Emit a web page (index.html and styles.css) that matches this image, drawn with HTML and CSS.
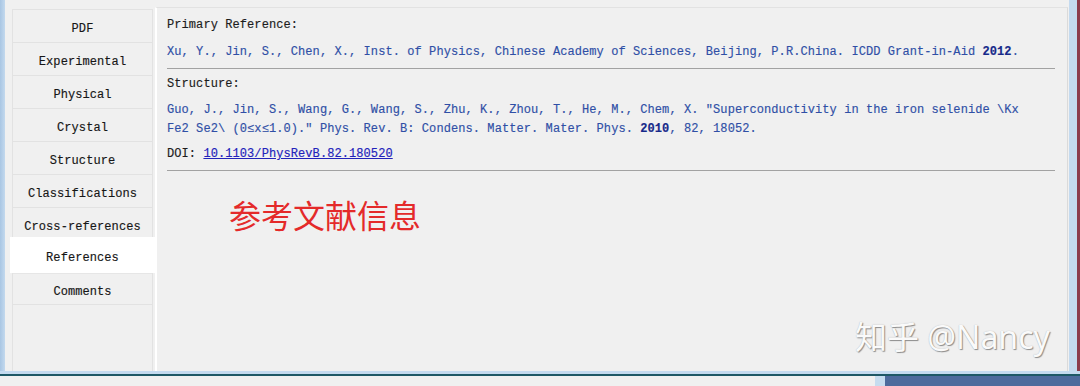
FILE: index.html
```html
<!DOCTYPE html>
<html>
<head>
  <meta charset="utf-8">
  <title>References</title>
  <link rel="stylesheet" href="styles.css">
</head>
<body>
  <div class="screen">
    <div class="frame">
      <div class="edge-left"></div>
      <div class="dialog">
        <nav class="tabs">
          <div class="tab">PDF</div>
          <div class="tab">Experimental</div>
          <div class="tab">Physical</div>
          <div class="tab">Crystal</div>
          <div class="tab">Structure</div>
          <div class="tab">Classifications</div>
          <div class="tab">Cross-references</div>
          <div class="tab selected">References</div>
          <div class="tab">Comments</div>
        </nav>

        <main class="panel">
          <div class="label">Primary Reference:</div>
          <p class="ref single">Xu, Y., Jin, S., Chen, X., Inst. of Physics, Chinese Academy of Sciences, Beijing, P.R.China. ICDD Grant-in-Aid <b>2012</b>.</p>
          <hr class="sep">

          <div class="label">Structure:</div>
          <p class="ref">Guo, J., Jin, S., Wang, G., Wang, S., Zhu, K., Zhou, T., He, M., Chem, X. "Superconductivity in the iron selenide \Kx<br>Fe2 Se2\ (0≤x≤1.0)." Phys. Rev. B: Condens. Matter. Mater. Phys. <b>2010</b>, 82, 18052.</p>
          <div class="doi">DOI: <a href="#">10.1103/PhysRevB.82.180520</a></div>
          <hr class="sep">

          <div class="note">参考文献信息</div>
        </main>
      </div>
      <div class="edge-right"></div>
    </div>
    <div class="frame-bottom"></div>
    <div class="taskbar">
      <div class="bar-gap"></div>
      <div class="bar-light"></div>
      <div class="bar-dark"></div>
    </div>

    <div class="watermark">知乎 @Nancy</div>
  </div>
</body>
</html>
```

FILE: styles.css
```css
/* Reference tab of the card viewer */
html, body {
  margin: 0;
  padding: 0;
}

body {
  background: #f0f0f0;
  font-family: "Liberation Mono", "DejaVu Sans Mono", monospace;
  font-size: 12px;
  letter-spacing: 0.08px;
  color: #1c1c1c;
  -webkit-text-stroke: 0.15px currentColor;
}

.screen {
  width: 1080px;
  height: 386px;
  overflow: hidden;
  position: relative;
}

/* Window frame */
.frame {
  display: flex;
  height: 371px;
}

.edge-left {
  width: 5px;
  background: linear-gradient(90deg, #a9c6e3 0%, #c3d9ee 100%);
}

.edge-right {
  width: 12px;
  background: linear-gradient(90deg, #f0f0f0 0, #f0f0f0 1px, #c4daef 1px, #c4daef 9px, #8c3c4c 9px, #8c3c4c 100%);
}

.frame-bottom {
  height: 3px;
  background: #c4daef;
}

.taskbar {
  display: flex;
  height: 12px;
  border-top: 2px solid #1e5866;
}

.bar-gap {
  width: 875px;
  background: #f0f0f0;
}

.bar-light {
  width: 10px;
  background: #c6dcef;
}

.bar-dark {
  flex: 1;
  background: #4d6a9c;
}

/* Dialog body */
.dialog {
  flex: 1;
  display: flex;
  gap: 2px;
  padding: 7px 0 0 7px;
}

.tabs {
  width: 139px;
  margin-top: 2px;
  border-left: 1px solid #e2e2e2;
  border-right: 1px solid #e2e2e2;
  display: flex;
  flex-direction: column;
}

.tab {
  height: 26px;
  line-height: 26px;
  padding-top: 6px;
  border-top: 1px solid #e2e2e2;
  text-align: center;
  color: #161616;
}

.tab.selected {
  background: #fff;
  margin: -3px -3px 0 -3px;
  height: 28px;
  line-height: 26px;
  padding-top: 8px;
  border-top: none;
}

.tab.selected + .tab {
  border-top: 1px solid #e6e6e6;
  height: 24px;
  line-height: 24px;
  border-bottom: 1px solid #e2e2e2;
}

.panel {
  flex: 1;
  border-top: 1px solid #e2e2e2;
  border-left: 2px solid #fff;
  border-right: 1px solid #dadada;
  padding: 8px 12px 0 10px;
}

.label {
  line-height: 18px;
  color: #1c1c1c;
}

.ref {
  margin: 8px 0 0 0;
  line-height: 19px;
  color: #2f4fa6;
  white-space: nowrap;
}

.ref.single {
  margin-top: 9px;
  line-height: 18px;
}

.ref b {
  color: #16298a;
}

.doi {
  margin-top: 6px;
  line-height: 18px;
}

.doi a {
  color: #2222bb;
  text-decoration: underline;
}

.sep {
  margin: 7px 0 6px 0;
  height: 0;
  border: none;
  border-top: 1px solid #a2a2a2;
}

.note {
  margin: 22px 0 0 62px;
  font-family: "Noto Sans CJK SC", sans-serif;
  font-size: 32px;
  line-height: 42px;
  letter-spacing: 0;
  color: #e42a2a;
  -webkit-text-stroke: 0;
}

/* Site watermark over the screenshot */
.watermark {
  position: absolute;
  left: 855px;
  top: 315px;
  font-family: "Noto Sans", "Noto Sans CJK SC", sans-serif;
  font-size: 32px;
  line-height: 44px;
  letter-spacing: 0;
  color: #fafafa;
  -webkit-text-stroke: 0;
  text-shadow: 1px 1px 1px #8c8c8c, 0 0 1px #b0b0b0;
  white-space: nowrap;
}
```
